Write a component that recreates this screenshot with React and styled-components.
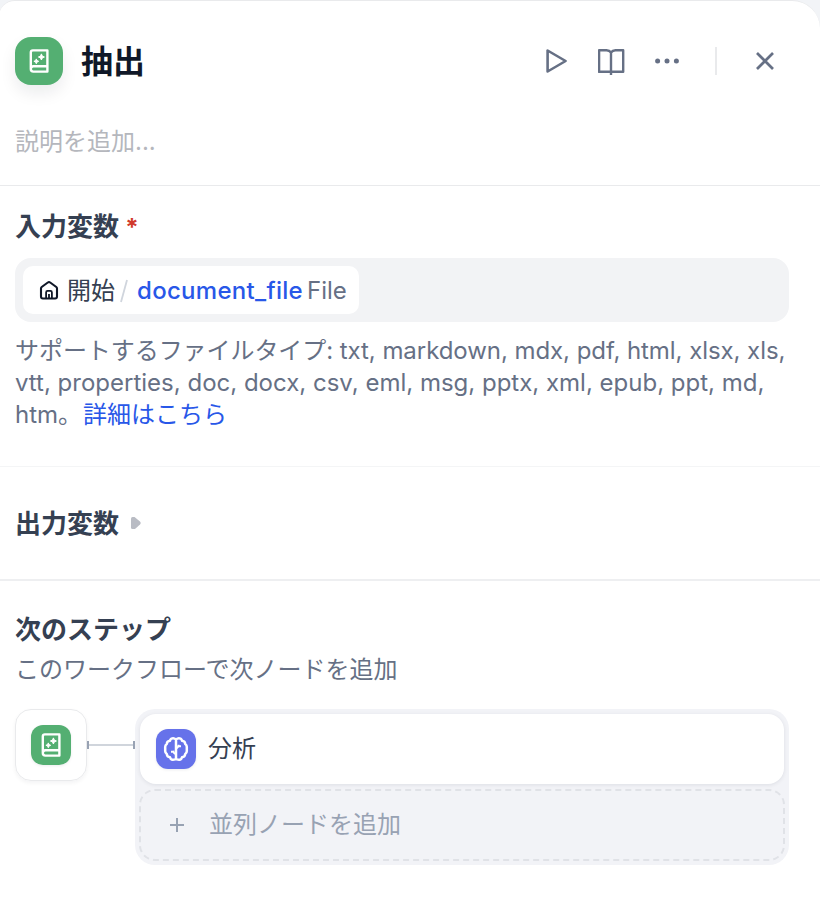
import React from "react";
import styled, { createGlobalStyle } from "styled-components";

const GlobalStyle = createGlobalStyle`
  * {
    box-sizing: border-box;
  }

  body {
    margin: 0;
    background-color: #f2f4f7;
    font-family: Inter, "Noto Sans CJK JP", sans-serif;
    -webkit-font-smoothing: antialiased;
  }
`;

function ExtractorIcon({ size }) {
  return (
    <svg width={size} height={size} viewBox="0 0 24 24" fill="none">
      <path
        d="M3.8 20V3.4Q3.8 1.4 5.8 1.4H20.4V22.6H6.4Q3.8 22.6 3.8 20Q3.8 17.3 6.4 17.3H20.4"
        stroke="#fff"
        strokeWidth="2.4"
        strokeLinejoin="round"
      />
      <path
        d="M14.4 4.9 15.3 7.1 17.4 8 15.3 8.9 14.4 11 13.5 8.9 11.4 8 13.5 7.1ZM9.3 9.9 10 11.6 11.7 12.3 10 13 9.3 14.7 8.6 13 6.9 12.3 8.6 11.6Z"
        fill="#fff"
        stroke="#fff"
        strokeWidth="1"
        strokeLinejoin="round"
      />
    </svg>
  );
}

function BrainIcon() {
  return (
    <svg width="26" height="26" viewBox="0 0 26 26" fill="none">
      <path
        d="M13 3.4Q10.5 1.3 8.2 2.8 7.2 3.5 7 4.7 4 4.9 3.8 8 2 9.2 2.2 11.4V14.6Q2 16.8 3.8 18 4 21.1 7 21.3 7.6 24 10 23.8 12.2 23.8 13 22.6 13.8 23.8 16 23.8 18.4 24 19 21.3 22 21.1 22.2 18 24 16.8 23.8 14.6V11.4Q24 9.2 22.2 8 22 4.9 19 4.7 18.8 3.5 17.8 2.8 15.5 1.3 13 3.4V22.6"
        stroke="#fff"
        strokeWidth="2.5"
        strokeLinejoin="round"
        strokeLinecap="round"
      />
      <path d="M13 12.3Q15.4 12 15.6 8.8M15.4 10.3H18M13 17.8Q10.6 18 10.4 14.6M8 15.8H10.6" stroke="#fff" strokeWidth="1.9" />
    </svg>
  );
}

export default function App() {
  return (
    <>
      <GlobalStyle />
      <Panel>
        <Header>
          <TitleRow>
            <IconTile $size={48} $radius={16} $raised>
              <ExtractorIcon size={24} />
            </IconTile>
            <Title>抽出</Title>
            <Toolbar>
              <svg width="28" height="28" viewBox="0 0 28 28">
                <path d="M4.6 3.5V24.5L22.6 14Z" fill="none" stroke="currentColor" strokeWidth="2.6" strokeLinejoin="round" />
              </svg>
              <svg width="28" height="28" viewBox="0 0 28 28">
                <path
                  d="M13 28.5V5.5Q11.5 3.2 8.5 3.2H1.1V24.8H25.2V3.2H17.5Q14.5 3.2 13 5.5"
                  fill="none"
                  stroke="currentColor"
                  strokeWidth="2.4"
                  strokeLinejoin="round"
                />
              </svg>
              <svg width="28" height="28" viewBox="0 0 28 28" fill="currentColor">
                <circle cx="4.6" cy="14" r="2.5" />
                <circle cx="14" cy="14" r="2.5" />
                <circle cx="23.4" cy="14" r="2.5" />
              </svg>
              <ToolbarDivider />
              <svg width="28" height="28" viewBox="0 0 28 28">
                <path d="M6 6L22 22M22 6L6 22" stroke="currentColor" strokeWidth="2.7" />
              </svg>
            </Toolbar>
          </TitleRow>
          <Placeholder>説明を追加...</Placeholder>
        </Header>

        <InputSection>
          <Heading>
            入力変数 <Required>*</Required>
          </Heading>
          <VariableField>
            <VariableTag>
              <svg width="20" height="20" viewBox="0 0 20 20" fill="none">
                <path
                  d="M2 7.4Q2 6.6 2.7 6L8.8 1.5Q10 .7 11.2 1.5L17.3 6Q18 6.6 18 7.4V15.6Q18 17.5 16.1 17.5H3.9Q2 17.5 2 15.6Z"
                  stroke="#101828"
                  strokeWidth="2.1"
                />
                <path d="M7.1 17V11.4Q7.1 9.9 8.6 9.9H11.4Q12.9 9.9 12.9 11.4V17M10 13V17" stroke="#101828" strokeWidth="1.8" />
              </svg>
              <NodeName>開始</NodeName>
              <Slash viewBox="0 0 8 24">
                <path d="M1 23L7 1" stroke="#d0d5dd" strokeWidth="1.8" />
              </Slash>
              <VariableName>document_file</VariableName>
              <VariableType>File</VariableType>
            </VariableTag>
          </VariableField>
          <Support>
            <FirstLine>
              サポートするファイルタイプ: txt, markdown, mdx, pdf, html, xlsx, xls,
            </FirstLine>{" "}
            vtt, properties, doc, docx, csv, eml, msg, pptx, xml, epub, ppt, md,
            htm。<Link>詳細はこちら</Link>
          </Support>
        </InputSection>

        <OutputSection>
          <Heading>出力変数</Heading>
          <Arrow viewBox="0 0 10 14">
            <path d="M0 2.5Q0 1 1.5 1H3.5L9 5.5Q10.4 7 9 8.5L4 13H1.5Q0 13 0 11.5Z" fill="#b9bcc4" />
          </Arrow>
        </OutputSection>

        <NextSection>
          <Heading>次のステップ</Heading>
          <Hint>このワークフローで次ノードを追加</Hint>
          <Flow>
            <CurrentNode>
              <IconTile $size={40} $radius={12}>
                <ExtractorIcon size={24} />
              </IconTile>
            </CurrentNode>
            <Connector />
            <Branches>
              <NextNode>
                <IconTile $size={40} $radius={12} $color="#6672ea">
                  <BrainIcon />
                </IconTile>
                <NodeLabel>分析</NodeLabel>
              </NextNode>
              <AddNode>
                <svg width="14" height="14" viewBox="0 0 14 14">
                  <path d="M7 0V14M0 7H14" stroke="currentColor" strokeWidth="2" />
                </svg>
                <NodeLabel>並列ノードを追加</NodeLabel>
              </AddNode>
            </Branches>
          </Flow>
        </NextSection>
      </Panel>
    </>
  );
}

const Panel = styled.main`
  width: 821px;
  height: 920px;
  margin-left: -1px;
  padding-left: 1px;
  overflow: hidden;
  background-color: #fff;
  border-top: 1px solid #e9eaec;
  border-radius: 16px 28px 0 0;
  color: #354052;
`;

const Header = styled.header`
  height: 185px;
  padding: 36px 41px 0 15px;
  border-bottom: 1px solid #e9eaec;
`;

const TitleRow = styled.div`
  display: flex;
  align-items: center;
  height: 48px;
`;

const IconTile = styled.div`
  display: flex;
  align-items: center;
  justify-content: center;
  flex-shrink: 0;
  width: ${({ $size }) => $size}px;
  height: ${({ $size }) => $size}px;
  border-radius: ${({ $radius }) => $radius}px;
  background-color: ${({ $color }) => $color || "#54af72"};
  box-shadow: ${({ $raised }) =>
    $raised
      ? "0 8px 16px rgba(16, 24, 40, 0.08)"
      : "0 1px 3px rgba(16, 24, 40, 0.08)"};
`;

const Title = styled.h1`
  margin: 2px 0 0 18px;
  color: #101828;
  font-size: 32px;
  font-weight: 700;
  line-height: 48px;
`;

const Toolbar = styled.div`
  display: flex;
  align-items: center;
  gap: 27px;
  margin-left: auto;
  color: #667085;
`;

const ToolbarDivider = styled.div`
  width: 2px;
  height: 28px;
  margin: 0 7px;
  background-color: #e9eaec;
`;

const Placeholder = styled.div`
  margin-top: 41px;
  color: #b5b7bd;
  font-size: 24px;
  line-height: 32px;
`;

const InputSection = styled.section`
  height: 281px;
  padding: 25px 31px 0 15px;
  border-bottom: 1px solid #f4f5f6;
`;

const Heading = styled.h2`
  margin: 0;
  color: #354052;
  font-size: 26px;
  font-weight: 700;
  line-height: 32px;
`;

const Required = styled.span`
  color: #d03a2b;
  font-size: 24px;
`;

const VariableField = styled.div`
  display: flex;
  align-items: center;
  height: 64px;
  margin-top: 14px;
  padding: 8px;
  border-radius: 16px;
  background-color: #f2f3f5;
`;

const VariableTag = styled.div`
  display: flex;
  align-items: center;
  height: 48px;
  padding: 2px 12px 0 16px;
  border-radius: 10px;
  background-color: #fff;
  font-size: 24px;
  line-height: 32px;
  white-space: nowrap;
`;

const NodeName = styled.span`
  margin-left: 8px;
`;

const Slash = styled.svg`
  width: 8px;
  height: 24px;
  margin: 0 9px 0 5px;
`;

const VariableName = styled.span`
  color: #2857e8;
  font-weight: 500;
  letter-spacing: 0.3px;
`;

const VariableType = styled.span`
  margin-left: 4px;
  color: #667085;
`;

const Support = styled.p`
  margin: 13px 0 0;
  color: #667085;
  font-size: 24px;
  line-height: 32px;
`;

const FirstLine = styled.span`
  letter-spacing: -0.06px;
`;

const Link = styled.a`
  margin-left: 1px;
  color: #2857e8;
`;

const OutputSection = styled.section`
  display: flex;
  align-items: center;
  gap: 12px;
  height: 114px;
  padding: 2px 0 0 15px;
  border-bottom: 2px solid #eeeff1;
`;

const Arrow = styled.svg`
  width: 10px;
  height: 14px;
  margin-bottom: 2px;
`;

const NextSection = styled.section`
  padding: 33px 31px 0 15px;
`;

const Hint = styled.p`
  margin: 8px 0 0;
  color: #667085;
  font-size: 24px;
  line-height: 32px;
`;

const Flow = styled.div`
  display: flex;
  align-items: flex-start;
  margin-top: 23px;
`;

const CurrentNode = styled.div`
  display: flex;
  align-items: center;
  justify-content: center;
  width: 72px;
  height: 72px;
  border: 1px solid #e9eaec;
  border-radius: 16px;
  box-shadow: 0 2px 4px rgba(16, 24, 40, 0.05);
`;

const Connector = styled.div`
  display: flex;
  align-items: center;
  width: 48px;
  height: 8px;
  margin-top: 32px;
  border: solid #98a2b3;
  border-width: 0 2px;

  &::before {
    content: "";
    width: 100%;
    height: 2px;
    background-color: #d0d5dc;
  }
`;

const Branches = styled.div`
  flex: 1;
  height: 156px;
  padding: 5px;
  border-radius: 20px;
  background-color: #f2f3f7;
`;

const NextNode = styled.div`
  display: flex;
  align-items: center;
  gap: 12px;
  height: 70px;
  padding-left: 16px;
  border-radius: 16px;
  background-color: #fff;
  box-shadow: 0 1px 4px rgba(16, 24, 40, 0.09);
`;

const NodeLabel = styled.span`
  font-size: 24px;
  line-height: 32px;
`;

const AddNode = styled.div`
  display: flex;
  align-items: center;
  gap: 25px;
  height: 72px;
  margin: 5px -1px 0;
  padding-left: 29px;
  border: 2px dashed #e0e2e7;
  border-radius: 16px;
  color: #98a2b3;
`;
